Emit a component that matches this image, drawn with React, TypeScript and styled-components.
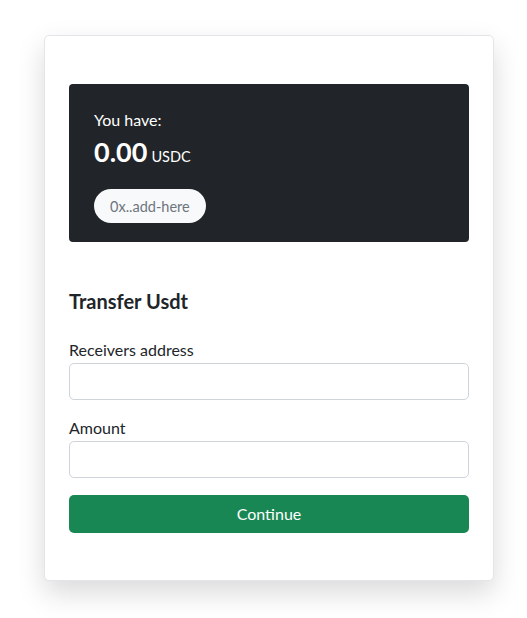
import React from "react";
import styled, { createGlobalStyle } from "styled-components";

const GlobalStyle = createGlobalStyle`
  body {
    margin: 0;
    background: #ffffff;
    font-family: Lato, "Noto Sans", sans-serif;
    color: #212529;
  }
`;

const Page = styled.div`
  min-height: 618px;
  box-sizing: border-box;
  padding: 35px 0 0 44px;
`;

const Card = styled.div`
  width: 400px;
  padding: 48px 24px 47px 24px;
  border: 1px solid #e3e6e9;
  border-radius: 5px;
  background: #fff;
  box-shadow: 0 12px 28px rgba(0, 0, 0, 0.15);
  display: flex;
  flex-direction: column;
`;

const Balance = styled.div`
  background: #212529;
  border-radius: 4px;
  padding: 24px 25px 19px 25px;
  color: #fff;
  display: flex;
  flex-direction: column;
  align-items: flex-start;
`;

const Caption = styled.div`
  font-size: 16px;
  line-height: 24px;
`;

const AmountRow = styled.div`
  margin-top: 4px;
  display: flex;
  align-items: baseline;
  gap: 4px;
`;

const Value = styled.span`
  font-size: 27px;
  line-height: 32px;
  font-weight: 700;
`;

const Unit = styled.span`
  font-size: 14.5px;
`;

const AddressPill = styled.button`
  margin-top: 21px;
  height: 34px;
  padding: 0 16px;
  border: none;
  border-radius: 17px;
  background: #f8f9fa;
  color: #6c757d;
  font-family: inherit;
  font-size: 14.5px;
  cursor: pointer;
`;

const Title = styled.h2`
  margin: 47px 0 0 0;
  font-size: 20px;
  line-height: 24px;
  font-weight: 700;
`;

const Form = styled.form`
  display: flex;
  flex-direction: column;
`;

const Label = styled.label<{ $first?: boolean }>`
  display: block;
  margin-top: ${(p) => (p.$first ? "25px" : "16px")};
  font-size: 16px;
  line-height: 24px;
  color: #212529;
`;

const Input = styled.input`
  box-sizing: border-box;
  width: 100%;
  height: 37px;
  margin-top: 1px;
  padding: 6px 12px;
  border: 1px solid #ced4da;
  border-radius: 5px;
  font-family: inherit;
  font-size: 16px;
  outline: none;
`;

const Submit = styled.button`
  margin-top: 17px;
  height: 38px;
  padding: 0 0 2px 0;
  border: none;
  border-radius: 5px;
  background: #198754;
  color: #fff;
  font-family: inherit;
  font-size: 16px;
  cursor: pointer;
`;

export default function App() {
  return (
    <>
      <GlobalStyle />
      <Page>
        <Card>
          <Balance>
            <Caption>You have:</Caption>
            <AmountRow>
              <Value>0.00</Value>
              <Unit>USDC</Unit>
            </AmountRow>
            <AddressPill type="button">0x..add-here</AddressPill>
          </Balance>

          <Title>Transfer Usdt</Title>

          <Form onSubmit={(e) => e.preventDefault()}>
            <Label $first htmlFor="receiver">
              Receivers address
            </Label>
            <Input id="receiver" type="text" />

            <Label htmlFor="amount">Amount</Label>
            <Input id="amount" type="text" />

            <Submit type="submit">Continue</Submit>
          </Form>
        </Card>
      </Page>
    </>
  );
}
